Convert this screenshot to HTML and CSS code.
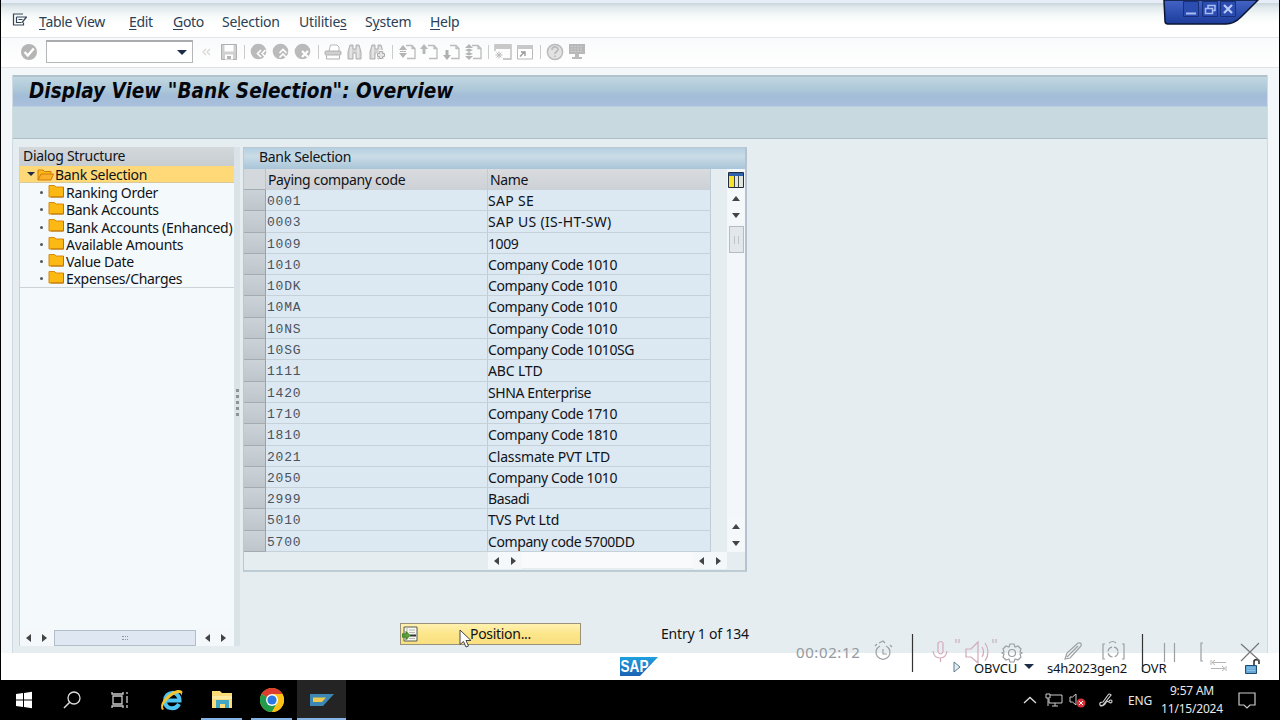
FILE: index.html
```html
<!DOCTYPE html>
<html lang="en">
<head>
    <meta charset="UTF-8">
    <title>Display View "Bank Selection": Overview</title>
    <link rel="stylesheet" href="styles.css">
</head>
<body>
    <!-- shared icon shapes -->
    <svg class="defs">
        <symbol id="folder" viewBox="0 0 17 13">
            <path d="M1 .5h5.500l1.500 1.500h7.500v10H1z" fill="#fdb913" stroke="#d88a10"/>
            <path d="M15.500 2v10H3" fill="none" stroke="#b9770f"/>
        </symbol>
        <symbol id="page" viewBox="0 0 18 18">
            <path d="M8 2.500h6l3 3v10H9M14 2.500v3h3" fill="none" stroke="#bcbcbc" stroke-width="1.300"/>
        </symbol>
        <symbol id="binoc" viewBox="0 0 18 18">
            <path d="M4 2h3v4h3V2h3l2 7v7h-5v-6H7v6H2V9z" fill="#d4d4d4" stroke="#b0b0b0"/>
            <path d="M5 4v11M12 4v11" stroke="#f4f4f4"/>
        </symbol>
    </svg>

    <div class="window">
        <div class="menubar">
            <svg class="menu-icon" viewBox="0 0 16 14"><path d="M11 1H1.500v11h10V9.500M4.500 4H15M4.500 4v5.500h5M6.500 6.500h4M14.500 4L10 9.500" fill="none" stroke="#34465c" stroke-width="1.200"/></svg>
            <span class="m1"><u>T</u>able View</span>
            <span class="m2"><u>E</u>dit</span>
            <span class="m3"><u>G</u>oto</span>
            <span class="m4">Se<u>l</u>ection</span>
            <span class="m5">Utilitie<u>s</u></span>
            <span class="m6">S<u>y</u>stem</span>
            <span class="m7"><u>H</u>elp</span>
        </div>

        <div class="toolbar">
            <svg viewBox="0 0 18 18"><circle cx="9" cy="9" r="8" fill="#b5b5b5"/><path d="M4.500 9l3.300 3.500 6-7" fill="none" stroke="#fff" stroke-width="2.400"/></svg>
            <div class="command"><i class="caret"></i></div>
            <svg class="back" viewBox="0 0 18 18"><path d="M9 6L6 9l3 3M13 6l-3 3 3 3" fill="none" stroke="#d8d8d8" stroke-width="1.300"/></svg>
            <svg viewBox="0 0 18 18"><path d="M1.500 1.500h15v15h-15z" fill="#d0d0d0" stroke="#b0b0b0"/><path d="M4.500 2h9v6.500h-9zM5 11.500h8v5H5z" fill="#fff"/><path d="M7 13h4v3H7z" fill="#b5b5b5"/></svg>
            <i class="sep"></i>
            <svg viewBox="0 0 18 18"><circle cx="8.500" cy="8.500" r="7.800" fill="#bababa"/><path d="M11 7l-3.500 3.500L11 14M15.500 7L12 10.500l3.500 3.500" fill="none" stroke="#fff" stroke-width="1.600"/></svg>
            <svg viewBox="0 0 18 18"><circle cx="8.500" cy="8.500" r="7.800" fill="#bababa"/><path d="M7.500 10L11 6.500l3.500 3.500M7.500 14.500L11 11l3.500 3.500" fill="none" stroke="#fff" stroke-width="1.600"/></svg>
            <svg viewBox="0 0 18 18"><circle cx="8.500" cy="8.500" r="7.800" fill="#bababa"/><path d="M8 8l6 6M14 8l-6 6" stroke="#fff" stroke-width="2.200"/></svg>
            <i class="sep"></i>
            <svg viewBox="0 0 18 18"><path d="M5 8l1.500-6H13l2 2v4" fill="#fff" stroke="#b8b8b8"/><rect x="1" y="8" width="16" height="4" rx="1" fill="#cfcfcf" stroke="#b0b0b0"/><path d="M2.500 12.500v3.500h13v-3.500" fill="none" stroke="#b0b0b0"/></svg>
            <svg viewBox="0 0 18 18"><use href="#binoc"/></svg>
            <svg viewBox="0 0 18 18"><use href="#binoc"/><path d="M13 7v10M8.500 12h9" stroke="#fff" stroke-width="4.500"/><path d="M11.500 8.500h3v2h2v3h-2v2h-3v-2h-2v-3h2z" fill="#e4e4e4" stroke="#aaa"/></svg>
            <i class="sep"></i>
            <svg viewBox="0 0 18 18"><use href="#page"/><path d="M1 7l4-5 4 5zM1 10l4 5 4-5z" fill="#b4b4b4"/><path d="M2 8.500h6" stroke="#b4b4b4"/></svg>
            <svg viewBox="0 0 18 18"><use href="#page"/><path d="M0 6l4-5 4 5H5.500v5h-3V6z" fill="#b8b8b8"/></svg>
            <svg viewBox="0 0 18 18"><use href="#page"/><path d="M1 12l4 5 4-5H6.500V7h-3v5z" fill="#b0b0b0"/></svg>
            <svg viewBox="0 0 18 18"><use href="#page"/><path d="M1 5l4-4 4 4zM1 13l4 4 4-4zM1 7l4-1.500L9 7 5 9zM1 11l4-2 4 2-4 1.500z" fill="#b4b4b4"/></svg>
            <i class="sep"></i>
            <svg viewBox="0 0 18 18"><path d="M1 8V2h16v14H9" fill="none" stroke="#b8b8b8" stroke-width="1.300"/><path d="M1 2h16v4H1z" fill="#c8c8c8"/><path d="M5 8.500v7M1.500 12h7M2.500 9.500l5 5M7.500 9.500l-5 5" stroke="#bbb"/></svg>
            <svg viewBox="0 0 18 18"><path d="M1.500 2.500h15v13.500h-15z" fill="#fff" stroke="#b8b8b8"/><path d="M1 2h16v4H1z" fill="#c8c8c8"/><path d="M4 13.500l4-4M5 9h4v4" fill="none" stroke="#999" stroke-width="1.400"/></svg>
            <i class="sep"></i>
            <svg viewBox="0 0 18 18"><circle cx="9" cy="9" r="7.600" fill="#e2e2e2" stroke="#bbb" stroke-width="1.500"/><path d="M6 7c0-4 6-4 6-.500 0 2-3 2-3 4.500M9 12.500V14" fill="none" stroke="#bbb" stroke-width="1.800"/></svg>
            <svg viewBox="0 0 18 18"><path d="M1 1h16v10H1z" fill="#b8b8b8"/><path d="M3 3.500h12M3 6h12M3 8.500h12" stroke="#ccc" stroke-dasharray="2 1"/><path d="M7 11h4v3H7zM4 14h10v2H4z" fill="#bbb"/></svg>
        </div>

        <div class="screen">
            <h1>Display View "Bank Selection": Overview</h1>
            <div class="appbar"></div>
            <div class="work">
                <div class="tree">
                    <div class="tree-head">Dialog Structure</div>
                    <div class="node root"><i class="caret"></i><svg viewBox="0 0 17 13"><path d="M1 12V2h5l1.500 1.500H14V6" fill="#fdb913" stroke="#d07c10"/><path d="M1 12l3-6h12.500L14 12z" fill="#fbb02a" stroke="#d07c10"/></svg>Bank Selection</div>
                    <div class="node"><b></b><svg><use href="#folder"/></svg>Ranking Order</div>
                    <div class="node"><b></b><svg><use href="#folder"/></svg>Bank Accounts</div>
                    <div class="node"><b></b><svg><use href="#folder"/></svg>Bank Accounts (Enhanced)</div>
                    <div class="node"><b></b><svg><use href="#folder"/></svg>Available Amounts</div>
                    <div class="node"><b></b><svg><use href="#folder"/></svg>Value Date</div>
                    <div class="node last"><b></b><svg><use href="#folder"/></svg>Expenses/Charges</div>
                    <div class="tree-scroll">
                        <i class="left"></i><i class="right"></i>
                        <div class="thumb"><span></span></div>
                        <i class="left"></i><i class="right"></i>
                    </div>
                </div>
                <div class="splitter"><span></span></div>

                <div class="content">
                    <div class="panel">
                        <div class="panel-title">Bank Selection</div>
                        <div class="panel-body">
                            <div class="grid">
                                <div class="row head"><i></i><span>Paying company code</span><span>Name</span></div>
                                <div class="row"><i></i><code>0001</code><span class="caps">SAP SE</span></div>
                                <div class="row"><i></i><code>0003</code><span class="caps">SAP US (IS-HT-SW)</span></div>
                                <div class="row"><i></i><code>1009</code><span>1009</span></div>
                                <div class="row"><i></i><code>1010</code><span>Company Code 1010</span></div>
                                <div class="row"><i></i><code>10DK</code><span>Company Code 1010</span></div>
                                <div class="row"><i></i><code>10MA</code><span>Company Code 1010</span></div>
                                <div class="row"><i></i><code>10NS</code><span>Company Code 1010</span></div>
                                <div class="row"><i></i><code>10SG</code><span>Company Code 1010SG</span></div>
                                <div class="row"><i></i><code>1111</code><span class="mixed">ABC LTD</span></div>
                                <div class="row"><i></i><code>1420</code><span>SHNA Enterprise</span></div>
                                <div class="row"><i></i><code>1710</code><span>Company Code 1710</span></div>
                                <div class="row"><i></i><code>1810</code><span>Company Code 1810</span></div>
                                <div class="row"><i></i><code>2021</code><span class="mixed">Classmate PVT LTD</span></div>
                                <div class="row"><i></i><code>2050</code><span>Company Code 1010</span></div>
                                <div class="row"><i></i><code>2999</code><span>Basadi</span></div>
                                <div class="row"><i></i><code>5010</code><span class="mixed">TVS Pvt Ltd</span></div>
                                <div class="row"><i></i><code>5700</code><span>Company code 5700DD</span></div>
                            </div>
                            <div class="vscroll">
                                <svg viewBox="0 0 16 16"><path d="M.500.500h15v15H.500z" fill="#cfdcec" stroke="#222c3c"/><path d="M1 1h14v3H1z" fill="#2f62ad"/><path d="M1 4h5v11H1z" fill="#f5e32c"/><path d="M7 4h3v11H7zM11 4h4v11h-4z" fill="#dfe6e0"/><path d="M6.500 4v11M10.500 4v11" stroke="#444"/></svg>
                                <i class="up"></i><i class="down"></i>
                                <div class="thumb"><span></span></div>
                                <div class="space"></div>
                                <i class="up"></i><i class="down"></i>
                            </div>
                        </div>
                        <div class="hscroll"><i class="left"></i><i class="right"></i><div class="track"></div><i class="left"></i><i class="right"></i></div>
                    </div>
                    <div class="actions">
                        <div class="position">
                            <svg viewBox="0 0 16 16"><path d="M2 1h13v14H2z" fill="#f7f7ef" stroke="#555b50"/><path d="M5 1v14M7 4h6M7 6.500h6M7 12.500h6" stroke="#b5bab0"/><path d="M8 9.500h6" stroke="#333" stroke-width="2"/><path d="M0 8h4V5.500l4 4-4 4V11H0z" fill="#5da338" stroke="#37761d"/></svg>
                            <span>Position...</span>
                        </div>
                        <span class="entry">Entry 1 of 134</span>
                    </div>
                </div>
            </div>
        </div>

        <div class="statusbar">
            <svg class="sap" viewBox="0 0 38 19">
                <linearGradient id="sapblue" x2="0" y2="1"><stop offset="0" stop-color="#20a0df"/><stop offset="1" stop-color="#1a62b4"/></linearGradient>
                <path d="M0 0h38L20 19H0z" fill="url(#sapblue)"/>
                <text x="0.500" y="15" textLength="28" lengthAdjust="spacingAndGlyphs">SAP</text>
            </svg>
            <svg class="play" viewBox="0 0 8 12"><path d="M1 1l6 5-6 5z" fill="#e4eef2" stroke="#5c7d8b"/></svg>
            <span class="tcode">OBVCU</span><i class="caret"></i>
            <span class="server">s4h2023gen2</span>
            <span class="ovr">OVR</span>
            <svg class="arrows" viewBox="0 0 17 13"><path d="M1 1v5M16 7v5M2 3.500h14M1 9.500h14M5 1L2 3.500 5 6M12 7l3 2.500-3 2.500" fill="none" stroke="#b5b5b5"/></svg>
            <svg class="lock" viewBox="0 0 17 17"><path d="M10 7V3.500C10 1 15 1 15 3.500V6" fill="none" stroke="#333" stroke-width="1.600"/><path d="M1.500 7.500h11v8h-11z" fill="#65a8d8" stroke="#1f4d74"/><path d="M3 10h8M3 12.500h8" stroke="#8fc4e6"/></svg>
        </div>

        <!-- remote session bar -->
        <svg class="session" viewBox="0 0 100 27">
            <linearGradient id="navy" x2="0" y2="1"><stop offset="0" stop-color="#4264c4"/><stop offset="1" stop-color="#1d3c9c"/></linearGradient>
            <path d="M2 0h94L79 17q-7 7-15 7H6q-3 0-3-3z" fill="url(#navy)" stroke="#0a1433" stroke-width="1.500"/>
            <path d="M21.500 1.500h15v15h-15zM40.500 1.500h15v15h-15zM58.500 1.500h15v15h-15z" fill="#2b4db0" stroke="#182f7c"/>
            <path d="M24 13.500h10" stroke="#a9bdf5" stroke-width="2"/>
            <path d="M43.500 8.500h7v5h-7zM46 8V5.500h7v5h-2" fill="none" stroke="#a9bdf5" stroke-width="1.500"/>
            <path d="M62 5l8 8M70 5l-8 8" stroke="#b9c9f8" stroke-width="2.200"/>
        </svg>

        <!-- screen recorder controls -->
        <div class="recorder">
            <span>00:02:12</span>
            <svg viewBox="0 0 490 42">
                <g fill="none" stroke="#9a9fa3" stroke-width="1.200">
                    <path d="M92 15a7 7 0 1 0 6 0M95 18v5h4M91 12l4-2 2 2M87 15l2-2M102 14l2 2"/>
                    <path d="M124.500 3v38" stroke="#333"/>
                    <g stroke="#d3a9ba"><path d="M150 12q3-3 5 0v9q-2 4-5 0zM145 20q1 7 7 7t7-7M152.500 27v4M178 18h5l7-7v21l-7-6h-5zM194 16q3 5 0 10M197 12q6 9 0 18"/></g>
                    <path d="M168 8v4M171 8v4M205 8v4M208 8v4" stroke="#c5aeb8"/>
                    <circle cx="224" cy="22" r="3.500"/><path d="M222 13h4l1 3 3-1 3 3-1 3 2 1-2 1 1 3-3 3-3-1-1 3h-4l-1-3-3 1-3-3 1-3-2-1 2-1-1-3 3-3 3 1z"/>
                    <path d="M277 28l2-6 11-10q4-1 3 3L282 27zM279 26l11-11"/>
                    <path d="M317 13h-2v15h2M334 13h2v15h-2" /><circle cx="325" cy="21" r="5" stroke-dasharray="6 2"/><path d="M321 12q4-3 7 0"/>
                    <path d="M354.500 3v38" stroke="#333"/>
                    <path d="M376.500 12v19M386.500 12v19M415 12h-2v18h2"/>
                    <path d="M453 13l19 17M471 12l-18 18" stroke="#777"/>
                </g>
            </svg>
        </div>

        <svg class="pointer" viewBox="0 0 13 19"><path d="M1 1v14.500l3.500-3 2.500 5.500 2.500-1L7 11.500h5z" fill="#fff" stroke="#444"/></svg>
    </div>

    <div class="taskbar">
        <div class="app"><svg viewBox="0 0 24 24"><path d="M4 6l7-1v6.500H4zM12 4.900l8-1.100v7.700h-8zM4 12.500h7V19l-7-1zM12 12.500h8V20.200l-8-1.100z" fill="#fff"/></svg></div>
        <div class="app"><svg viewBox="0 0 24 24"><circle cx="14" cy="10" r="6" fill="none" stroke="#ddd" stroke-width="1.300"/><path d="M9.700 14.300L4 20" stroke="#ddd" stroke-width="1.500"/></svg></div>
        <div class="app"><svg viewBox="0 0 24 24"><path d="M4 4v2h11V4M5 8h9v8H5zM4 20v-2h11v2M19 4v2M19 8v7M19 17v3" fill="none" stroke="#ccc" stroke-width="1.300"/></svg></div>
        <div class="app"><svg viewBox="0 0 24 24"><path d="M6.500 12.500h14C20.500 2 6 2.500 6 13c0 9 11 9 14 3" fill="none" stroke="#4cc5f4" stroke-width="4"/><path d="M3 22C-2 14 16-2 23 3c1 1 0 3-1 5 1-5-5-3-9 0C6 13 2 19 5 21" fill="#f6c431"/></svg></div>
        <div class="app open"><svg viewBox="0 0 24 24"><path d="M2 3h8l2 2h10v15H2z" fill="#fbdc78"/><path d="M2 8h20v3H2z" fill="#fdeaa5"/><path d="M6 20v-8h13v8h-4v-4h-5v4z" fill="#42a6c6"/></svg></div>
        <div class="app open"><svg viewBox="0 0 24 24"><circle cx="12" cy="12" r="12" fill="#fbc116"/><path d="M12 12L1.600 6A12 12 0 0 1 22.400 6z" fill="#dc3d30"/><path d="M12 12L1.600 6A12 12 0 0 0 12 24l5-9z" fill="#229b4c"/><path d="M12 6h10.400A12 12 0 0 1 12 24l5-9z" fill="#fbc116"/><circle cx="12" cy="12" r="6" fill="#fff"/><circle cx="12" cy="12" r="4.600" fill="#2b78e4"/></svg></div>
        <div class="app open active"><svg viewBox="0 0 24 24"><path d="M0 6h24L13 18H0z" fill="#3c88b3"/><path d="M3 9.500h13l-4 4.500H3z" fill="#f0c84e"/></svg></div>
        <div class="tray">
            <svg class="chev" viewBox="0 0 14 8"><path d="M1 7l6-5.500L13 7" fill="none" stroke="#ddd" stroke-width="1.300"/></svg>
            <svg class="net" viewBox="0 0 18 14"><path d="M5 2h12v8H4V6M10 10v3M7 13h6M1 1h4v4H1zM3 5v8" fill="none" stroke="#ccc"/></svg>
            <svg class="vol" viewBox="0 0 18 15"><path d="M1 4h2.500L7 1v11L3.500 9H1z" fill="none" stroke="#ccc"/><circle cx="12" cy="10" r="4.500" fill="#d9303a"/><path d="M10 8l4 4M14 8l-4 4" stroke="#fff"/></svg>
            <svg class="pen" viewBox="0 0 14 14"><path d="M1 13l3-1 8-10q-2-2-3 0L4 9q-4 0-3 3 2 2 5-1 2-4 4-2 3 2 3-1-1-2-3 0" fill="none" stroke="#ccc" stroke-width="1.200"/></svg>
            <span class="lang">ENG</span>
            <div class="clock">9:57 AM<br>11/15/2024</div>
            <svg class="note" viewBox="0 0 18 17"><path d="M1 1h16v12h-5l-3 3-3-3H1z" fill="none" stroke="#ccc" stroke-width="1.200"/></svg>
        </div>
    </div>
</body>
</html>
```
FILE: styles.css
```css
* {
    box-sizing: border-box;
}
body {
    margin: 0;
    width: 1280px;
    height: 720px;
    overflow: hidden;
    background: #000;
    font-family: "Noto Sans", sans-serif;
    font-size: 14px;
    letter-spacing: -0.3px;
    color: #101318;
}
.defs {
    position: absolute;
    width: 0;
    height: 0;
}
svg {
    display: block;
    flex: none;
}
.window {
    position: relative;
    height: 680px;
    margin: 0 1px;
    background: #f4f7fa;
    display: flex;
    flex-direction: column;
}

/* menu and toolbar */
.menubar {
    height: 38px;
    padding: 4px 0 0 11px;
    display: flex;
    align-items: center;
    border-top: 3px solid #e6edf8;
    border-bottom: 1px solid #e3e6e8;
    background: linear-gradient(#c9d5dc, #e3ebee 5px, #f8fbfb 14px, #fff 22px);
    color: #2b3f55;
    white-space: nowrap;
}
.menubar span {
    line-height: 20px;
}
.menubar u {
    text-underline-offset: 2px;
}
.menu-icon {
    width: 16px;
    height: 14px;
    margin: 0 11px 5px 0;
}
.m1 { width: 90px; }
.m2 { width: 44px; }
.m3 { width: 49px; }
.m4 { width: 77px; letter-spacing: -0.2px; }
.m5 { width: 66px; letter-spacing: -0.2px; }
.m6 { width: 65px; letter-spacing: -0.2px; }
.toolbar {
    height: 30px;
    padding: 0 0 2px 19px;
    display: flex;
    align-items: center;
    gap: 4px;
    background: linear-gradient(#f9fafb, #fff);
    border-bottom: 1px solid #dfe2e5;
}
.toolbar svg {
    width: 18px;
    height: 18px;
}
.command {
    width: 147px;
    height: 23px;
    margin: 0 0 0 4px;
    padding-right: 5px;
    background: #fff;
    border: 1px solid #b4b7ba;
    border-top: 2px solid #a9abad;
    display: flex;
    align-items: center;
    justify-content: flex-end;
}
.toolbar .back {
    margin-right: 1px;
}
.caret {
    border: 5px solid transparent;
    border-top-color: #1f2a44;
    border-bottom: 0;
}
.sep {
    width: 1px;
    height: 14px;
    margin: 0 1px 0 2px;
    background: #ccc;
}

/* screen area */
.screen {
    margin: 7px 11px 0 11px;
    height: 578px;
    display: flex;
    flex-direction: column;
    background: #e6edf0;
    border-left: 1px solid #cfdde3;
    border-right: 1px solid #cfdde3;
}
h1 {
    margin: 0;
    height: 32px;
    padding-left: 16px;
    border-top: 2px solid #b3c3cb;
    border-bottom: 1px solid #b8cfe0;
    background: linear-gradient(#c2d7e1, #a9c5d7 50%, #a3bcd8 65%, #a8c0db);
    font-family: "DejaVu Sans Condensed", "DejaVu Sans", sans-serif;
    font-stretch: condensed;
    font-size: 20.5px;
    line-height: 28px;
    font-style: italic;
    letter-spacing: 0.02px;
    white-space: nowrap;
    color: #05070c;
}
.appbar {
    height: 32px;
    background: #c8d9e0;
    border-bottom: 1px solid #aebdc4;
}
.work {
    flex: 1;
    display: flex;
    padding: 7px 0 7px 6px;
    border-top: 1px solid #e4f0f6;
}
.tree {
    width: 215px;
    display: flex;
    flex-direction: column;
    background: #f4f9fc;
    border-left: 1px solid #c5d3da;
}
.tree-head {
    height: 19px;
    padding-left: 3px;
    line-height: 18px;
    background: linear-gradient(#d3d8db, #c8cdd1);
    letter-spacing: -0.3px;
}
.node {
    height: 17.3px;
    padding-left: 20px;
    display: flex;
    align-items: center;
    line-height: 17px;
    white-space: nowrap;
    position: relative;
    top: 1px;
}
.node svg {
    width: 17px;
    height: 13px;
    margin: -3px 1px 0 0;
}
.node b {
    width: 3px;
    height: 3px;
    margin-right: 5px;
    border-radius: 2px;
    background: #555;
}
.root {
    top: 0;
    height: 17px;
    padding-left: 7px;
    background: #ffd978;
    border-bottom: 1px solid #d9c89a;
}
.root svg {
    margin: 0 1px 0 0;
}
.root .caret {
    border-width: 4px;
    border-bottom: 0;
    margin-right: 2px;
}
.last {
    border-bottom: 1px solid #ccd3d7;
}
.tree-scroll {
    height: 17px;
    margin-top: auto;
    display: flex;
    align-items: center;
}
.up, .down, .left, .right {
    width: 17px;
    height: 17px;
    flex: none;
    display: flex;
    align-items: center;
    justify-content: center;
    background: #f4f8fa;
}
.left::before, .right::before, .up::before, .down::before {
    content: "";
    border: 4px solid transparent;
}
.left::before {
    border-right: 5px solid #444;
    border-left: 0;
}
.right::before {
    border-left: 5px solid #444;
    border-right: 0;
}
.up::before {
    border-bottom: 5px solid #444;
    border-top: 0;
}
.down::before {
    border-top: 5px solid #444;
    border-bottom: 0;
}
.thumb {
    display: flex;
    align-items: center;
    justify-content: center;
}
.tree-scroll .left {
    width: 16px;
}
.tree-scroll .thumb {
    width: 142px;
    height: 16px;
    margin: 0 3px 0 1px;
    background: #dfe8f2;
    border: 1px solid #b2bdc8;
}
.tree-scroll .thumb span {
    width: 6px;
    height: 4px;
    border: 1px dotted #8a98a6;
    border-width: 1px 0;
}
.splitter {
    width: 6px;
    background: #dae4e8;
    display: flex;
    align-items: center;
    justify-content: center;
}
.splitter span {
    height: 27px;
    border-left: 3px dotted #8c9499;
    margin-top: 11px;
}

/* table control */
.content {
    margin-left: 3px;
}
.panel {
    width: 504px;
    height: 425px;
    border: 1px solid #b9c8d2;
    border-right: 2px solid #b5c3cf;
    border-bottom: 2px solid #bccbd4;
}
.panel-title {
    height: 21px;
    padding-left: 15px;
    line-height: 18px;
    background: linear-gradient(#b5cfe1, #cadce6 40%, #a9c5d9);
    letter-spacing: -0.3px;
}
.panel-body {
    display: flex;
    justify-content: space-between;
}
.grid {
    width: 467px;
}
.row {
    height: 21.3px;
    display: grid;
    grid-template-columns: 22px 222px 223px;
    grid-template-rows: 100%;
    line-height: 22px;
    letter-spacing: -0.4px;
    background: #dce8f2;
}
.row > * {
    border-right: 1px solid #c0cdd8;
    border-bottom: 1px solid #c6d1da;
    white-space: nowrap;
}
.row i {
    background: linear-gradient(#ccd3d8, #bfc6cb);
    border-right: 1px solid #99a2aa;
    border-bottom-color: #a4acb2;
}
.row code {
    padding: 1px 0 0 1px;
    font: 13px/21px "Liberation Mono", monospace;
    letter-spacing: 0.8px;
    color: #4b535c;
}
.row .caps {
    letter-spacing: 0.3px;
}
.row .mixed {
    letter-spacing: -0.15px;
}
.head {
    height: 21px;
    background: linear-gradient(#d9dbde, #cdd1d5);
}
.head i {
    background: #d3d8dc;
    border-right-color: #b9c2ca;
}
.head span {
    padding-left: 2px;
    letter-spacing: -0.35px;
}
.vscroll {
    width: 18px;
    display: flex;
    flex-direction: column;
    align-items: center;
    background: #f3f7fa;
}
.vscroll svg {
    width: 16px;
    height: 16px;
    margin: 3px 0 2px;
}
.vscroll .thumb {
    width: 15px;
    height: 27px;
    margin-top: 2px;
    background: #e2e7eb;
    border: 1px solid #b4bcc3;
}
.vscroll .thumb span {
    width: 5px;
    height: 8px;
    border: 1px solid #bbc2c8;
    border-width: 0 1px;
}
.space {
    flex: 1;
}
.hscroll {
    height: 18px;
    padding-left: 244px;
    display: flex;
}
.track {
    width: 171px;
    height: 16px;
    background: #f8fafb;
}
.actions {
    display: flex;
    margin: 51px 0 0 157px;
    align-items: center;
}
.position {
    width: 181px;
    height: 22px;
    padding-left: 1px;
    display: flex;
    align-items: center;
    border: 1px solid #98937a;
    background: linear-gradient(#fff1b0, #fce68a 50%, #f9df80);
}
.position svg {
    width: 16px;
    height: 16px;
}
.position span {
    margin: -1px 0 0 52px;
}
.entry {
    margin: -1px 0 0 80px;
    letter-spacing: -0.2px;
}

/* status bar */
.statusbar {
    height: 27px;
    padding: 3px 0 0 619px;
    display: flex;
    align-items: center;
    background: #fff;
    font-size: 13px;
    letter-spacing: -0.2px;
}
.sap {
    width: 38px;
    height: 19px;
    margin-top: -3px;
}
.sap text {
    font: bold 16px "Liberation Sans", sans-serif;
    letter-spacing: 0;
    fill: #fff;
}
.play {
    width: 8px;
    height: 12px;
    margin: -3px 0 0 295px;
}
.tcode {
    width: 50px;
    margin-left: 13px;
}
.statusbar .caret {
    margin-top: -4px;
}
.server {
    width: 94px;
    margin-left: 13px;
}
.ovr {
    width: 69px;
}
.arrows {
    width: 17px;
    height: 13px;
    margin-top: -5px;
}
.lock {
    width: 17px;
    height: 17px;
    margin: -3px 0 0 17px;
}

/* floating pieces */
.session {
    position: absolute;
    left: 1161px;
    top: 0;
    width: 100px;
    height: 27px;
}
.recorder {
    position: absolute;
    left: 787px;
    top: 631px;
    width: 490px;
    height: 42px;
}
.recorder span {
    position: absolute;
    left: 8px;
    top: 11px;
    font: 15px/20px "Noto Sans", sans-serif;
    letter-spacing: 0.6px;
    color: #949a9f;
}
.recorder svg {
    width: 490px;
    height: 42px;
}
.pointer {
    position: absolute;
    left: 458px;
    top: 629px;
    width: 13px;
    height: 19px;
}

/* windows taskbar */
.taskbar {
    height: 40px;
    display: flex;
    background: #000;
    color: #e8e8e8;
}
.app {
    width: 48px;
    display: flex;
    align-items: center;
    justify-content: center;
    border-bottom: 2px solid transparent;
}
.app:nth-child(4) {
    width: 54px;
}
.app.open {
    width: 41px;
    margin-left: 3px;
    border-bottom-color: #85b3e6;
}
.app.open + .app.open {
    margin-left: 9px;
}
.app.active,
.app.open + .app.active {
    width: 49px;
    margin-left: 5px;
    background: #242424;
}
.app svg {
    width: 24px;
    height: 24px;
    margin-top: 2px;
}
.tray {
    margin-left: auto;
    display: flex;
    align-items: center;
    font-size: 12px;
    letter-spacing: -0.2px;
}
.chev {
    width: 14px;
    height: 8px;
    margin-right: 8px;
}
.net {
    width: 18px;
    height: 14px;
    margin-right: 6px;
}
.vol {
    width: 18px;
    height: 15px;
    margin-right: 12px;
}
.pen {
    width: 14px;
    height: 14px;
    margin-right: 15px;
}
.lang {
    width: 26px;
}
.clock {
    width: 72px;
    margin: 0 10px 0 2px;
    line-height: 18px;
    text-align: center;
}
.note {
    width: 18px;
    height: 17px;
    margin-right: 24px;
}
```
